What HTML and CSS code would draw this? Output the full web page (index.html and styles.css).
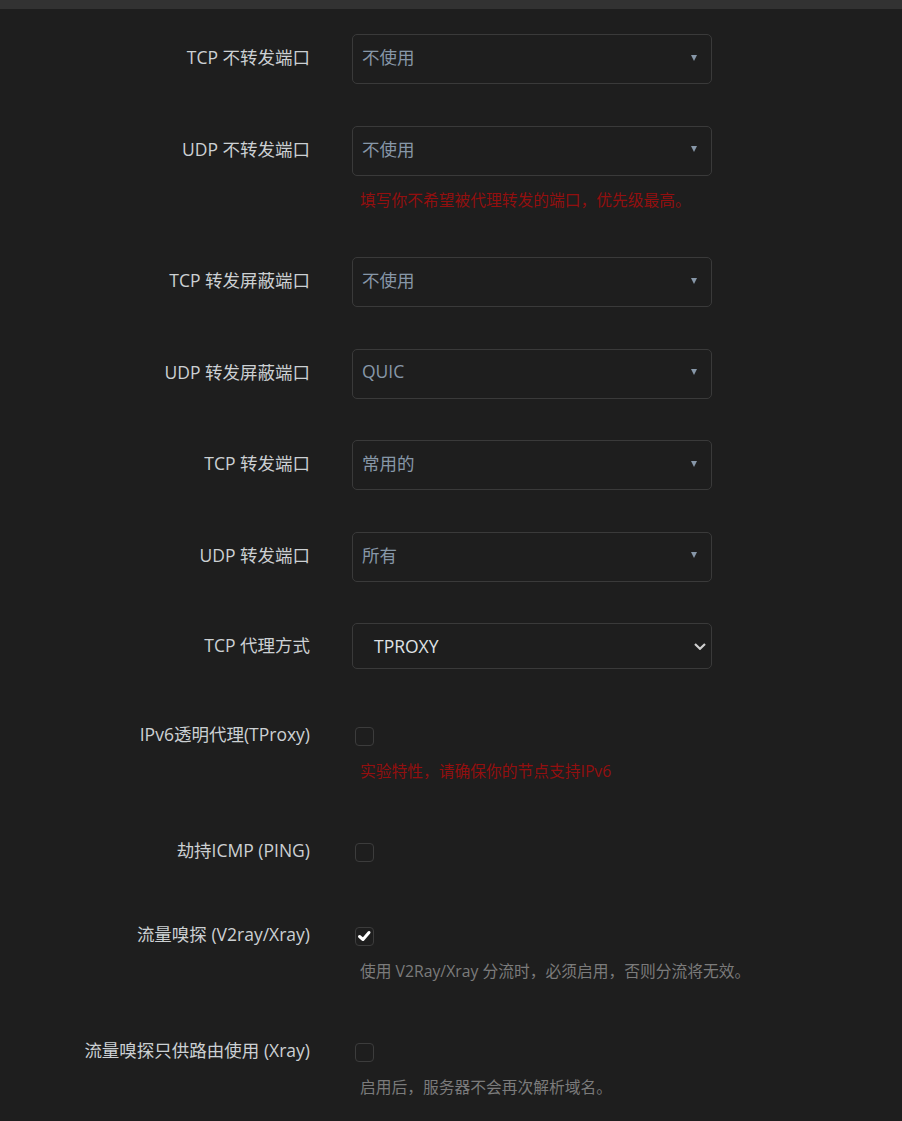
FILE: index.html
```html
<!DOCTYPE html>
<html lang="zh-CN">
<head>
<meta charset="utf-8">
<title>设置</title>
<link rel="stylesheet" href="styles.css">
</head>
<body>
<div class="topbar"></div>
<div class="form">
  <div class="row">
    <div class="label label-select">TCP 不转发端口</div>
    <div class="field"><div class="dropdown"><span class="value">不使用</span><span class="tri"></span></div></div>
  </div>
  <div class="row">
    <div class="label label-select">UDP 不转发端口</div>
    <div class="field">
      <div class="dropdown"><span class="value">不使用</span><span class="tri"></span></div>
      <div class="hint hint-select warn">填写你不希望被代理转发的端口，优先级最高。</div>
    </div>
  </div>
  <div class="row">
    <div class="label label-select">TCP 转发屏蔽端口</div>
    <div class="field"><div class="dropdown"><span class="value">不使用</span><span class="tri"></span></div></div>
  </div>
  <div class="row">
    <div class="label label-select">UDP 转发屏蔽端口</div>
    <div class="field"><div class="dropdown"><span class="value">QUIC</span><span class="tri"></span></div></div>
  </div>
  <div class="row">
    <div class="label label-select">TCP 转发端口</div>
    <div class="field"><div class="dropdown"><span class="value">常用的</span><span class="tri"></span></div></div>
  </div>
  <div class="row">
    <div class="label label-select">UDP 转发端口</div>
    <div class="field"><div class="dropdown"><span class="value">所有</span><span class="tri"></span></div></div>
  </div>
  <div class="row">
    <div class="label label-native">TCP 代理方式</div>
    <div class="field">
      <div class="native">
        <span class="native-value">TPROXY</span>
        <svg class="chev" width="12" height="7" viewBox="0 0 12 7"><polyline points="1,1 6,5.8 11,1" fill="none" stroke="#cfcfcf" stroke-width="2.2"/></svg>
      </div>
    </div>
  </div>
  <div class="row">
    <div class="label label-check">IPv6透明代理(TProxy)</div>
    <div class="field">
      <div class="checkwrap"><span class="check"></span></div>
      <div class="hint hint-check warn">实验特性，请确保你的节点支持IPv6</div>
    </div>
  </div>
  <div class="row">
    <div class="label label-check">劫持ICMP (PING)</div>
    <div class="field">
      <div class="checkwrap"><span class="check"></span></div>
    </div>
  </div>
  <div class="row">
    <div class="label label-check">流量嗅探 (V2ray/Xray)</div>
    <div class="field">
      <div class="checkwrap"><span class="check checked"><svg width="17" height="17" viewBox="0 0 17 17"><polyline points="3.5,8.5 7,11.5 13,4.5" fill="none" stroke="#ffffff" stroke-width="3" stroke-linecap="round" stroke-linejoin="round"/></svg></span></div>
      <div class="hint hint-check muted">使用 V2Ray/Xray 分流时，必须启用，否则分流将无效。</div>
    </div>
  </div>
  <div class="row">
    <div class="label label-check">流量嗅探只供路由使用 (Xray)</div>
    <div class="field">
      <div class="checkwrap"><span class="check"></span></div>
      <div class="hint hint-check muted">启用后，服务器不会再次解析域名。</div>
    </div>
  </div>
</div>
</body>
</html>
```

FILE: styles.css
```css
* { box-sizing: border-box; }

html, body {
  margin: 0;
  padding: 0;
  background: #1e1e1e;
}

body {
  font-family: "Open Sans", "Noto Sans CJK SC", sans-serif;
  font-size: 17.5px;
  color: #ccd0d3;
}

.topbar {
  height: 9px;
  background: #323232;
}

.form {
  padding-top: 25px;
}

.row {
  display: flex;
  align-items: flex-start;
  margin-bottom: 41.5px;
}

.label {
  width: 310px;
  flex: none;
  text-align: right;
  white-space: nowrap;
  color: #ccd0d3;
}

.label-select {
  line-height: 46px;
  padding-bottom: 4px;
}

.label-native {
  line-height: 44px;
  padding-bottom: 2px;
}

.label-check {
  padding-top: 14px;
  line-height: 19px;
}

.field {
  margin-left: 42px;
  width: 360px;
  flex: none;
}

.dropdown {
  height: 50px;
  border: 1px solid #3a3a3a;
  border-radius: 5px;
  display: flex;
  align-items: center;
  justify-content: space-between;
  padding: 0 14px 5px 9px;
}

.value {
  color: #8797a8;
  white-space: nowrap;
}

.tri {
  width: 0;
  height: 0;
  border-left: 3.5px solid transparent;
  border-right: 3.5px solid transparent;
  border-top: 6px solid #8797a8;
  margin-top: 2px;
}

.native {
  height: 46px;
  border: 1px solid #3a3a3a;
  border-radius: 5px;
  display: flex;
  align-items: center;
  justify-content: space-between;
  padding: 0 5px 0 21px;
}

.native-value {
  color: #dfe2e5;
  margin-top: -1px;
}

.chev {
  display: block;
  margin-top: 1px;
}

.checkwrap {
  height: 42.5px;
  padding-top: 16.5px;
  padding-left: 3px;
}

.check {
  display: flex;
  align-items: center;
  justify-content: center;
  width: 19px;
  height: 19px;
  border: 1px solid #3c3c3c;
  border-radius: 4px;
}

.hint {
  font-size: 15.75px;
  line-height: 26px;
  padding-left: 8px;
  white-space: nowrap;
}

.hint-select {
  margin-top: 11px;
  margin-bottom: 3px;
}

.hint-check {
  margin-top: 5px;
  margin-bottom: 1px;
}

.warn {
  color: #930f0f;
}

.muted {
  color: #7b7b7b;
}
```
